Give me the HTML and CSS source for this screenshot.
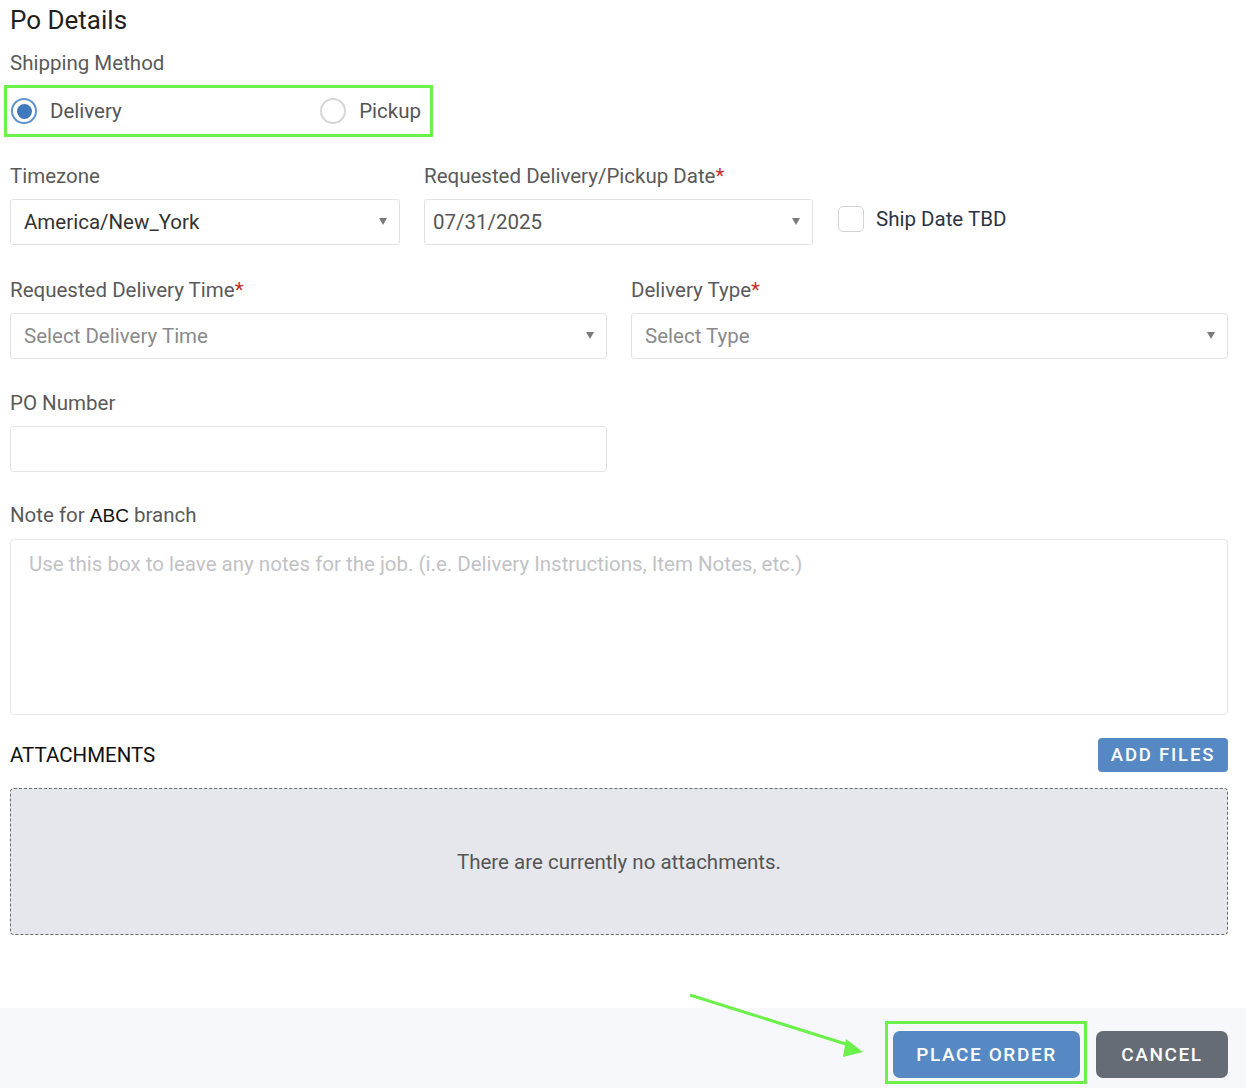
FILE: index.html
```html
<!DOCTYPE html>
<html>
<head>
<meta charset="utf-8">
<link rel="stylesheet" href="styles.css">
</head>
<body>
<div class="page">
  <h1 class="title">Po Details</h1>
  <div class="label ship-label">Shipping Method</div>
  <div class="radio-group">
    <label class="radio-item"><span class="radio checked"><span class="dot"></span></span><span class="radio-text">Delivery</span></label>
    <label class="radio-item"><span class="radio"></span><span class="radio-text">Pickup</span></label>
  </div>

  <div class="row row-1">
    <div class="field w-tz">
      <div class="label">Timezone</div>
      <div class="select"><span class="val">America/New_York</span><span class="caret"></span></div>
    </div>
    <div class="field w-date">
      <div class="label">Requested Delivery/Pickup Date<span class="req">*</span></div>
      <div class="select date"><span class="val muted">07/31/2025</span><span class="caret"></span></div>
    </div>
    <div class="tbd">
      <span class="checkbox"></span><span class="tbd-text">Ship Date TBD</span>
    </div>
  </div>

  <div class="row row-2">
    <div class="field half">
      <div class="label">Requested Delivery Time<span class="req">*</span></div>
      <div class="select"><span class="val placeholder">Select Delivery Time</span><span class="caret"></span></div>
    </div>
    <div class="field half">
      <div class="label">Delivery Type<span class="req">*</span></div>
      <div class="select"><span class="val placeholder">Select Type</span><span class="caret"></span></div>
    </div>
  </div>

  <div class="row row-3">
    <div class="field w-po">
      <div class="label">PO Number</div>
      <div class="input"></div>
    </div>
  </div>

  <div class="row row-4">
    <div class="field full">
      <div class="label">Note for <span class="abc">ABC</span> branch</div>
      <div class="textarea">Use this box to leave any notes for the job. (i.e. Delivery Instructions, Item Notes, etc.)</div>
    </div>
  </div>

  <div class="attach-head">
    <div class="attach-title">ATTACHMENTS</div>
    <button class="btn btn-add">ADD FILES</button>
  </div>
  <div class="dropzone">There are currently no attachments.</div>
</div>

<div class="footer">
  <div class="highlight"><button class="btn btn-place">PLACE ORDER</button></div>
  <button class="btn btn-cancel">CANCEL</button>
</div>

<svg class="arrow" width="1246" height="1088" viewBox="0 0 1246 1088">
  <line x1="690" y1="995" x2="852" y2="1046" stroke="#6cf04a" stroke-width="3"/>
  <polygon points="846,1039 863,1052 843,1057" fill="#6cf04a"/>
</svg>
</body>
</html>
```
FILE: styles.css
```css
* { box-sizing: border-box; }
html, body { margin: 0; padding: 0; background: #fff; }
body {
  font-family: Roboto, "Noto Sans", sans-serif;
  color: #555;
  width: 1246px;
  height: 1088px;
  position: relative;
  overflow: hidden;
}
.page {
  padding: 4px 18px 0 10px;
  height: 1008px;
}
.title {
  margin: 0;
  font-size: 26px;
  line-height: 32px;
  font-weight: 400;
  color: #1f1f1f;
}
.label {
  font-size: 20.5px;
  line-height: 24px;
  color: #5a5a5a;
  margin-bottom: 11px;
  white-space: nowrap;
}
.ship-label { margin-top: 15px; margin-bottom: 10px; }
.req { color: #c9302c; }
.radio-group {
  margin-left: -6px;
  width: 429px;
  height: 52px;
  border: 3px solid #6cf04a;
  display: flex;
  justify-content: space-between;
  align-items: center;
  padding: 0 9px 0 4px;
}
.radio-item { display: flex; align-items: center; }
.radio {
  width: 26px;
  height: 26px;
  border-radius: 50%;
  border: 2px solid #d6d6d6;
  display: flex;
  align-items: center;
  justify-content: center;
  background: #fff;
}
.radio.checked { border-color: #5f93cc; }
.radio .dot {
  width: 15px;
  height: 15px;
  border-radius: 50%;
  background: #4079bb;
}
.radio-text {
  margin-left: 13px;
  font-size: 20.5px;
  color: #555;
}
.row {
  display: flex;
  gap: 24px;
  margin-top: 33px;
}
.row-1 { margin-top: 27px; align-items: flex-start; }
.row-2 { margin-top: 33px; }
.row-3 { margin-top: 32px; }
.row-4 { margin-top: 31px; }
.field { display: flex; flex-direction: column; }
.w-tz { width: 390px; }
.w-date { width: 389px; }
.w-po { width: 597px; }
.half { flex: 1 1 0; }
.full { flex: 1; }
.select {
  height: 46px;
  border: 1px solid #e3e3e6;
  border-radius: 3px;
  display: flex;
  align-items: center;
  justify-content: space-between;
  padding: 0 12px 0 13px;
  font-size: 20.5px;
  color: #333;
  background: #fff;
}
.select.date { padding-left: 8px; }
.val.muted { color: #555; }
.val.placeholder { color: #8a8a8a; }
.caret {
  width: 0;
  height: 0;
  border-left: 4px solid transparent;
  border-right: 4px solid transparent;
  border-top: 7px solid #7a7a7a;
  margin-top: -2px;
}
.tbd {
  display: flex;
  align-items: center;
  margin-top: 42px;
  margin-left: 1px;
}
.checkbox {
  width: 26px;
  height: 26px;
  border: 1.5px solid #d3d3d7;
  border-radius: 5px;
  background: #fff;
}
.tbd-text {
  margin-left: 12px;
  font-size: 20.5px;
  color: #2b3445;
}
.input {
  height: 46px;
  border: 1px solid #e3e3ea;
  border-radius: 4px;
}
.abc {
  font-family: "Liberation Sans", Arial, sans-serif;
  color: #111;
  font-size: 19px;
}
.textarea {
  height: 176px;
  border: 1px solid #e6e6ec;
  border-radius: 4px;
  padding: 11px 18px;
  font-size: 20.5px;
  line-height: 26px;
  color: #c2c2c6;
}
.attach-head {
  margin-top: 23px;
  display: flex;
  justify-content: space-between;
  align-items: center;
  height: 34px;
}
.attach-title {
  font-size: 20.5px;
  color: #111;
}
.btn {
  font-family: Roboto, "Noto Sans", sans-serif;
  border: none;
  color: #fff;
  cursor: pointer;
  font-weight: 500;
}
.btn-add {
  width: 130px;
  height: 34px;
  border-radius: 4px;
  background: #5689c4;
  font-size: 18.5px;
  letter-spacing: 1.8px;
  padding: 0;
}
.dropzone {
  margin-top: 16px;
  height: 147px;
  background: #e6e7ec;
  border: 1.5px dashed #6b6b70;
  border-radius: 4px;
  display: flex;
  align-items: center;
  justify-content: center;
  font-size: 20.5px;
  color: #555;
}
.footer {
  height: 80px;
  background: #f7f8fb;
  display: flex;
  justify-content: flex-end;
  align-items: flex-start;
  padding: 13px 18px 0 0;
}
.highlight {
  border: 3px solid #6cf04a;
  padding: 7px 4px 3px 5px;
}
.btn-place {
  width: 187px;
  height: 47px;
  border-radius: 7px;
  background: #5689c4;
  font-size: 19px;
  letter-spacing: 1.6px;
  display: block;
}
.btn-cancel {
  margin-left: 9px;
  margin-top: 10px;
  width: 132px;
  height: 47px;
  border-radius: 7px;
  background: #666c76;
  font-size: 19px;
  letter-spacing: 1.6px;
}
.arrow {
  position: absolute;
  left: 0;
  top: 0;
  pointer-events: none;
}
```
